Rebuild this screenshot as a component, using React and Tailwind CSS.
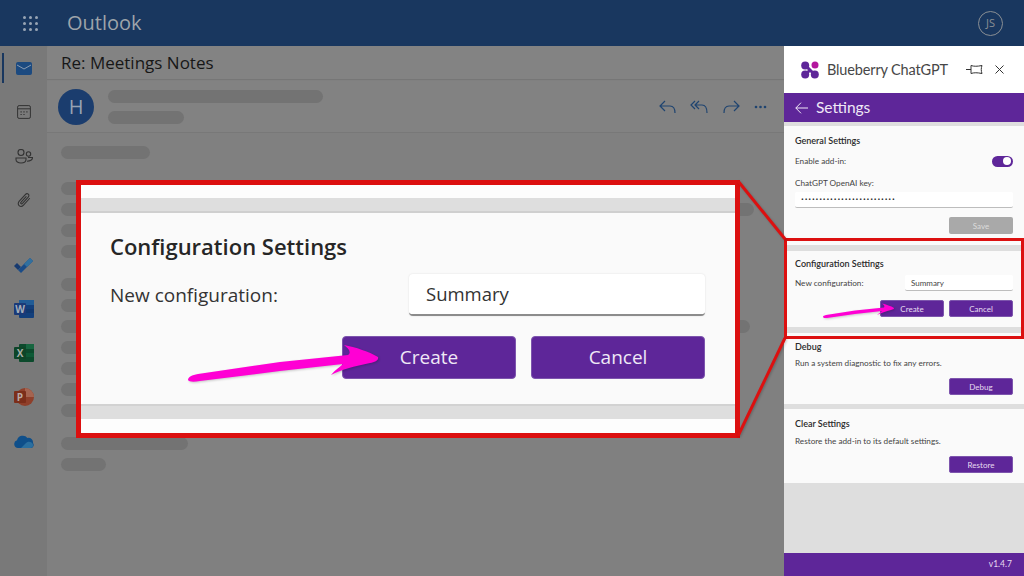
import React from 'react'

const barsA = [660, 693, 660, 660]
const barsB = [640, 660, 689, 640, 640, 660, 640]

function Bar({ w }) {
  return <div className="h-[13px] rounded-full bg-[#737373]" style={{ width: w }} />
}

function RailIcon({ children }) {
  return <div className="h-[44px] flex items-center justify-center">{children}</div>
}

function Rail() {
  return (
    <div className="relative w-[47px] shrink-0 bg-[#797979] flex flex-col">
      <div className="absolute left-[2px] top-[7px] h-[30px] w-[2px] bg-[#19375f]" />
      <RailIcon>
        <svg width="16" height="13" viewBox="0 0 16 13"><rect width="16" height="13" rx="2" fill="#1c4a80" /><path d="M1 3l7 4 7-4" fill="none" stroke="#8a9bb0" strokeWidth="1" /></svg>
      </RailIcon>
      <RailIcon>
        <svg width="14" height="14" viewBox="0 0 14 14" fill="none" stroke="#333"><rect x=".6" y=".6" width="12.8" height="12.8" rx="1.5" /><path d="M1 3.8h12" /><path d="M3.5 6.8h1.2M6.4 6.8h1.2M9.3 6.8h1.2M3.500 9.5h1.2M6.4 9.5h1.2" strokeWidth="1.2" /></svg>
      </RailIcon>
      <RailIcon>
        <svg width="18" height="15" viewBox="0 0 18 15" fill="none" stroke="#333" strokeWidth="1.100"><circle cx="6" cy="3.500" r="3" /><circle cx="13.500" cy="5" r="2.200" /><path d="M1 9h10v1.500c0 2-2 3.500-5 3.500s-5-1.500-5-3.500zM13 8.500h4.500c0 2-1.500 3.500-5.500 3.700" /></svg>
      </RailIcon>
      <RailIcon>
        <svg width="14" height="16" viewBox="0 0 14 16" fill="none" stroke="#333" strokeWidth="1.100" strokeLinecap="round"><path d="M12.500 6.500l-6 6.600c-1.300 1.400-3.200 1.600-4.400.5s-1.100-3 .2-4.400l6-6.600c.9-1 2.200-1.100 3-.4s.8 2-.1 3l-5.700 6.200c-.5.5-1.100.6-1.500.2s-.4-1 .1-1.500l5-5.400" /></svg>
      </RailIcon>
      <div className="h-[21px]" />
      <RailIcon>
        <svg width="19" height="15" viewBox="0 0 19 15"><path d="M0 8l3-3 4 4-3 3z" fill="#173a70" /><path d="M4 12l3-3 9-9 3 3L7 15z" fill="#1a4c88" /><path d="M10 6l6-6 3 3-6 6z" fill="#31709f" /></svg>
      </RailIcon>
      <RailIcon>
        <svg width="20" height="18" viewBox="0 0 20 18"><rect x="5" width="15" height="18" rx="1" fill="#123f7c" /><rect x="5" width="15" height="5" fill="#215c96" /><rect x="5" y="9" width="15" height="4" fill="#103870" /><rect y="3" width="12" height="12" rx="1" fill="#1a3a78" /><text x="6" y="12.500" textAnchor="middle" fontSize="10" fontWeight="700" fill="#a6aeba" fontFamily="Open Sans">W</text></svg>
      </RailIcon>
      <RailIcon>
        <svg width="20" height="18" viewBox="0 0 20 18"><rect x="5" width="15" height="18" rx="1" fill="#0c4a2c" /><rect x="12" width="8" height="5" fill="#176640" /><rect x="12" y="9" width="8" height="4" fill="#0d5a36" /><rect y="3" width="12" height="12" rx="1" fill="#0d4528" /><text x="6" y="12.500" textAnchor="middle" fontSize="10" fontWeight="700" fill="#a8b0aa" fontFamily="Open Sans">X</text></svg>
      </RailIcon>
      <RailIcon>
        <svg width="20" height="18" viewBox="0 0 20 18"><circle cx="11" cy="9" r="9" fill="#8f3f2a" /><path d="M11 0a9 9 0 0 1 9 9h-9z" fill="#a56450" /><rect y="3" width="12" height="12" rx="1" fill="#7c2e1a" /><text x="6" y="12.500" textAnchor="middle" fontSize="10" fontWeight="700" fill="#b8aaa6" fontFamily="Open Sans">P</text></svg>
      </RailIcon>
      <RailIcon>
        <svg width="20" height="13" viewBox="0 0 20 13"><path d="M4 13a4 4 0 0 1-1-7.800A6 6 0 0 1 13.500 3 4.500 4.500 0 0 1 19 8c1.500 2 .5 5-2 5z" fill="#0f4f8a" /><path d="M7 13l5-5c2-2 4-1.500 5.500-.5 2.500 1.500 2 5.500-1 5.500z" fill="#2b6f9f" /></svg>
      </RailIcon>
    </div>
  )
}

function ReadingPane() {
  return (
    <div className="flex-1 min-w-0 bg-[#808080] flex flex-col">
      <div className="h-[34px] bg-[#838383] border-b border-[#767676] rounded-tl-[3px] pl-[14px] flex items-center">
        <span className="text-[17px] font-medium text-[#171717]">Re: Meetings Notes</span>
      </div>
      <div className="h-[52px] mt-px bg-[#828282] border-b border-[#787878] pl-[11px] pr-[17px] flex items-center">
        <div className="w-[36px] h-[36px] rounded-full bg-[#1b3d6e] flex items-center justify-center text-[20px] text-[#97a3b3]">H</div>
        <div className="ml-[14px] flex flex-col gap-[8px]">
          <Bar w={215} />
          <Bar w={76} />
        </div>
        <div className="ml-auto flex items-center text-[#1f4470]">
          <svg width="18" height="14" viewBox="0 0 18 14" fill="none" stroke="currentColor" strokeWidth="1.200"><path d="M6 1L1 6l5 5M1 6h10c3 0 5 2 5 7" /></svg>
          <svg className="ml-[13px]" width="18" height="14" viewBox="0 0 18 14" fill="none" stroke="currentColor" strokeWidth="1.200"><path d="M5 1L1 5l4 4M9 1L5 5l4 4M5 5h7c3 0 5 3 5 8" /></svg>
          <svg className="ml-[14px]" width="18" height="14" viewBox="0 0 18 14" fill="none" stroke="currentColor" strokeWidth="1.200"><path d="M12 1l5 5-5 5M17 6H7c-3 0-5 2-5 7" /></svg>
          <svg className="ml-[14px]" width="13" height="4" viewBox="0 0 13 4" fill="currentColor"><circle cx="2" cy="2" r="1.300" /><circle cx="6.500" cy="2" r="1.300" /><circle cx="11" cy="2" r="1.300" /></svg>
        </div>
      </div>
      <div className="pl-[14px] pt-[13px] flex flex-col">
        <Bar w={89} />
        <div className="mt-[23px] flex flex-col gap-[8px]">
          {barsA.map((w, i) => <Bar key={i} w={w} />)}
        </div>
        <div className="mt-[20px] flex flex-col gap-[8px]">
          {barsB.map((w, i) => <Bar key={i} w={w} />)}
        </div>
        <div className="mt-[20px] flex flex-col gap-[8px]">
          <Bar w={127} />
          <Bar w={45} />
        </div>
      </div>
    </div>
  )
}

function PurpleBtn({ children }) {
  return <div className="w-[64px] h-[17px] rounded-[2px] bg-[#5e2699] border border-[#7d55ad] flex items-center justify-center text-[8px] text-[#e6dcf0]">{children}</div>
}

function Panel() {
  return (
    <div className="w-[240px] shrink-0 bg-[#dedede] flex flex-col font-['Lato',sans-serif]">
      <div className="h-[47px] bg-white pl-[17px] pr-[20px] flex items-center">
        <svg width="18" height="18" viewBox="0 0 18 18">
          <path d="M4.500 4.500L13.500 13.500M4.500 13.500L9 9" stroke="#5e2699" strokeWidth="3" />
          <circle cx="4.200" cy="4.500" r="4" fill="#5e2699" />
          <circle cx="4.200" cy="13.500" r="4" fill="#5e2699" />
          <circle cx="13.800" cy="13.500" r="4" fill="#5e2699" />
          <circle cx="14" cy="4" r="3.500" fill="#b3179e" />
        </svg>
        <span className="ml-[8px] text-[14.500px] tracking-[-0.15px] text-[#474747] whitespace-nowrap">Blueberry ChatGPT</span>
        <svg className="ml-auto" width="18" height="11" viewBox="0 0 18 11" fill="none" stroke="#333" strokeWidth="1"><path d="M0 5.500h5M5 1.500c3 1 6 1 11 0-1 2.500-1 5.500 0 8-5-1-8-1-11 0z" /></svg>
        <svg className="ml-[11px]" width="9" height="9" viewBox="0 0 9 9" stroke="#333" strokeWidth="1"><path d="M.5.500l8 8M8.500.500l-8 8" /></svg>
      </div>
      <div className="h-[29px] bg-[#5e2699] pl-[11px] flex items-center text-[#efe8f6]">
        <svg width="13" height="12" viewBox="0 0 13 12" fill="none" stroke="currentColor" strokeWidth="1"><path d="M6 .700L.800 6 6 11.300M.800 6H13" /></svg>
        <span className="ml-[8px] text-[15.500px]">Settings</span>
      </div>
      <div className="h-[4px]" />

      <div className="h-[119px] bg-[#fafafa] px-[11px] pt-[9px]">
        <div className="text-[9px] font-semibold text-[#2a2a2a] leading-[12px]">General Settings</div>
        <div className="mt-[8px] flex items-center justify-between">
          <span className="text-[8.200px] text-[#444] leading-[12px]">Enable add-in:</span>
          <div className="w-[21px] h-[11px] rounded-full bg-[#5e2699] flex items-center justify-end pr-[2px]">
            <div className="w-[8px] h-[8px] rounded-full bg-white" />
          </div>
        </div>
        <div className="mt-[10px] text-[8.200px] text-[#444] leading-[12px]">ChatGPT OpenAI key:</div>
        <div className="mt-[3px] h-[16px] bg-white rounded-[2px] border-b border-[#bdbdbd] pl-[6px] flex items-center font-['Open_Sans',sans-serif] text-[7.500px] text-[#333] tracking-[0.82px]">••••••••••••••••••••••••••</div>
        <div className="mt-[9px] flex justify-end">
          <div className="w-[64px] h-[17px] rounded-[2px] bg-[#a9a9a9] flex items-center justify-center text-[8px] text-[#dcdcdc]">Save</div>
        </div>
      </div>
      <div className="h-[6px]" />

      <div className="h-[76px] bg-[#fafafa] px-[11px] pt-[7px]">
        <div className="text-[9px] font-semibold text-[#2a2a2a] leading-[12px]">Configuration Settings</div>
        <div className="mt-[5px] flex items-center justify-between">
          <span className="text-[8.200px] text-[#444]">New configuration:</span>
          <div className="w-[108px] h-[16px] bg-white rounded-[2px] border-b border-[#bdbdbd] pl-[6px] flex items-center text-[8px] text-[#444]">Summary</div>
        </div>
        <div className="mt-[9px] flex justify-end gap-[5px]">
          <PurpleBtn>Create</PurpleBtn>
          <PurpleBtn>Cancel</PurpleBtn>
        </div>
      </div>
      <div className="h-[6px]" />

      <div className="h-[71px] bg-[#fafafa] px-[11px] pt-[8px]">
        <div className="text-[9px] font-semibold text-[#2a2a2a] leading-[12px]">Debug</div>
        <div className="mt-[4px] text-[8.200px] text-[#444] leading-[12px]">Run a system diagnostic to fix any errors.</div>
        <div className="mt-[9px] flex justify-end"><PurpleBtn>Debug</PurpleBtn></div>
      </div>
      <div className="h-[5px]" />

      <div className="h-[74px] bg-[#fafafa] px-[11px] pt-[9px]">
        <div className="text-[9px] font-semibold text-[#2a2a2a] leading-[12px]">Clear Settings</div>
        <div className="mt-[5px] text-[8.200px] text-[#444] leading-[12px]">Restore the add-in to its default settings.</div>
        <div className="mt-[9px] flex justify-end"><PurpleBtn>Restore</PurpleBtn></div>
      </div>

      <div className="flex-1" />
      <div className="h-[23px] bg-[#5e2699] pr-[12px] flex items-center justify-end text-[8.500px] text-[#e6dcf0]">v1.4.7</div>
    </div>
  )
}

function Callout() {
  return (
    <div className="absolute left-[76px] top-[180px] w-[664px] h-[258px] border-[5px] border-[#dc1010] bg-[#fdfdfd] flex flex-col">
      <div className="h-[13px] shrink-0" />
      <div className="h-[15px] shrink-0 bg-[#dedede] border-b-2 border-[#cfcfcf]" />
      <div className="flex-1 ml-[2px] mr-px bg-[#fafafa] pl-[27px] pr-[29px] flex flex-col">
        <div className="mt-[19px] text-[22px] leading-[28px] font-semibold text-[#262626]">Configuration Settings</div>
        <div className="mt-[14px] flex items-center justify-between">
          <span className="text-[19px] text-[#333]">New configuration:</span>
          <div className="w-[296px] h-[42px] bg-white rounded-[4px] border-b-2 border-[#8c8c8c] shadow-[0_0_2px_rgba(0,0,0,0.12)] pl-[17px] flex items-center text-[18.500px] text-[#333]">Summary</div>
        </div>
        <div className="mt-[20px] flex justify-end gap-[15px]">
          <div className="w-[174px] h-[43px] rounded-[4px] bg-[#5e2699] border border-[#7d55ad] flex items-center justify-center text-[19px] text-[#efe8f6]">Create</div>
          <div className="w-[174px] h-[43px] rounded-[4px] bg-[#5e2699] border border-[#7d55ad] flex items-center justify-center text-[19px] text-[#efe8f6]">Cancel</div>
        </div>
      </div>
      <div className="h-[15px] shrink-0 bg-[#dedede] border-t-2 border-[#d2d2d2]" />
      <div className="h-[14px] shrink-0" />
    </div>
  )
}

export default function App() {
  return (
    <div className="relative w-[1024px] h-[576px] overflow-hidden font-['Open_Sans',sans-serif] flex flex-col">
      <div className="h-[46px] shrink-0 bg-[#19375f] pl-[23px] pr-[21px] flex items-center">
        <div className="grid grid-cols-3 gap-[3px]">
          {Array.from({ length: 9 }).map((_, i) => <div key={i} className="w-[3px] h-[3px] rounded-full bg-[#98a4b4]" />)}
        </div>
        <span className="ml-[29px] text-[20px] font-medium text-[#9ea4aa]">Outlook</span>
        <div className="ml-auto w-[25px] h-[25px] rounded-full border border-[#8a8f94] flex items-center justify-center text-[11px] text-[#8a8f94]">JS</div>
      </div>
      <div className="flex-1 min-h-0 flex">
        <Rail />
        <ReadingPane />
        <Panel />
      </div>

      <Callout />
      <div className="absolute left-[784px] top-[238px] w-[240px] h-[101px] border-[3px] border-[#dc1010]" />

      <svg className="absolute inset-0 drop-shadow-[1px_1px_1px_rgba(0,0,0,0.2)]" width="1024" height="576" viewBox="0 0 1024 576">
        <path d="M738 181L785 239M738 436L785 338" stroke="#dc1010" strokeWidth="3" fill="none" />
        <path d="M188 380C188 377 192 375 198 374L280 362L348 355C352 352 348 348 344 345C355 347 370 352 378 357C379 360 375 362 370 363C355 366 340 370 331 375C335 370 340 367 343 364L280 371L200 381C194 382 189 382 188 380Z" fill="#ff00d4" />
        <path d="M823 317C823 316 824 315.500 826 315L855 310.500L884 307.500C885 306 884 305 882 303.500C886 304.500 891 306 894 308C894 309 893 309.500 891 310C886 311 881 313 877 315C879 313 881 312 882 311L855 314L827 318C825 318 823 318 823 317Z" fill="#ff00d4" />
      </svg>
    </div>
  )
}
